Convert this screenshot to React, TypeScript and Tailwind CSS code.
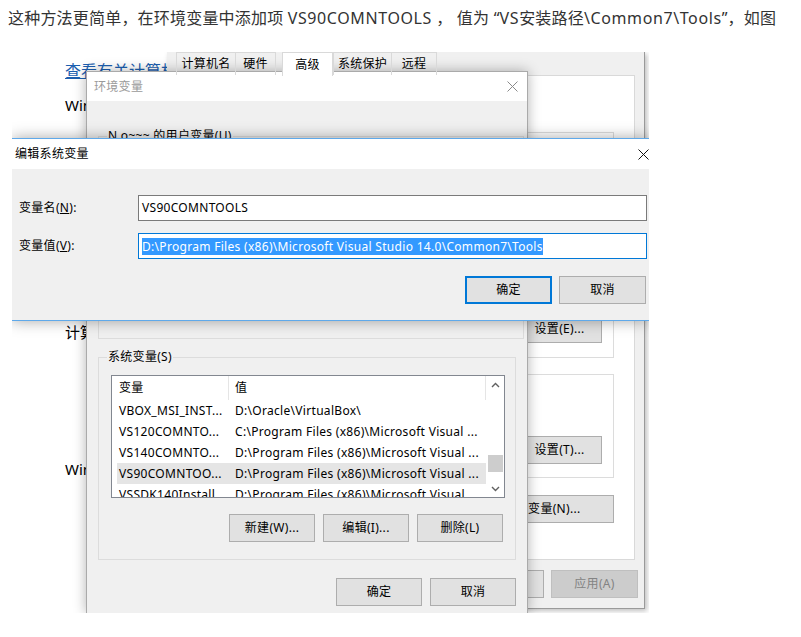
import React from "react";

const ui = "font-['Noto_Sans','Noto_Sans_CJK_SC',sans-serif]";

type BtnProps = {
  children: React.ReactNode;
  className?: string;
  primary?: boolean;
  disabled?: boolean;
};

function Btn({ children, className = "", primary = false, disabled = false }: BtnProps) {
  let look = "border border-[#adadad] bg-[#e1e1e1] text-black";
  if (primary) look = "border-2 border-[#0078d7] bg-[#e1e1e1] text-black";
  if (disabled) look = "border border-[#bfbfbf] bg-[#cccccc] text-[#838383]";
  return (
    <div className={`h-[28px] shrink-0 flex items-center justify-center text-[12px] whitespace-nowrap ${look} ${className}`}>
      {children}
    </div>
  );
}

function CloseX({ color }: { color: string }) {
  return (
    <svg width="11" height="11" viewBox="0 0 11 11">
      <path d="M0.5 0.5L10.5 10.5M10.5 0.5L0.5 10.5" stroke={color} strokeWidth="1" />
    </svg>
  );
}

function Chevron({ down = false }: { down?: boolean }) {
  return (
    <svg width="9" height="6" viewBox="0 0 9 6">
      <path
        d={down ? "M1 1L4.5 4.5L8 1" : "M1 5L4.5 1.5L8 5"}
        stroke="#606060"
        strokeWidth="1.4"
        fill="none"
      />
    </svg>
  );
}

const rows = [
  ["VBOX_MSI_INST...", "D:\\Oracle\\VirtualBox\\"],
  ["VS120COMNTO...", "C:\\Program Files (x86)\\Microsoft Visual ..."],
  ["VS140COMNTO...", "D:\\Program Files (x86)\\Microsoft Visual ..."],
  ["VS90COMNTOO...", "D:\\Program Files (x86)\\Microsoft Visual ..."],
  ["VSSDK140Install", "D:\\Program Files (x86)\\Microsoft Visual ..."],
];

const userRows = [
  ["OneDrive", "C:\\Users\\N o~~~\\OneDrive"],
  ["Path", "C:\\Users\\N o~~~\\AppData\\Local\\Microsoft..."],
  ["TEMP", "%USERPROFILE%\\AppData\\Local\\Temp"],
  ["TMP", "%USERPROFILE%\\AppData\\Local\\Temp"],
];

function ListView({ data, selected }: { data: string[][]; selected: number }) {
  return (
    <div className="mt-[10px] ml-[12px] mr-[10px] h-[123px] border border-[#828790] bg-white flex overflow-hidden text-[12px] text-black">
      <div className="flex-1 flex flex-col overflow-hidden">
        <div className="h-[24px] shrink-0 flex items-center border-r border-[#e5e5e5]">
          <div className="w-[117px] h-full pl-[7px] flex items-center border-r border-[#e5e5e5]">变量</div>
          <div className="pl-[6px]">值</div>
        </div>
        {data.map((r, i) => (
          <div
            key={i}
            className={`ml-[5px] h-[21px] shrink-0 flex items-center whitespace-nowrap ${i === selected ? "bg-[#e5e5e5]" : ""}`}
          >
            <div className="w-[111px] shrink-0 pl-[2px] overflow-hidden">{r[0]}</div>
            <div className="pl-[7px] overflow-hidden">{r[1]}</div>
          </div>
        ))}
      </div>
      <div className="w-[18px] flex flex-col items-center bg-white">
        <div className="h-[17px] flex items-center justify-center">
          <Chevron />
        </div>
        <div className="flex-1 w-full flex flex-col items-center">
          <div className="mt-[62px] w-[15px] h-[17px] bg-[#cdcdcd]" />
        </div>
        <div className="h-[17px] flex items-center justify-center">
          <Chevron down />
        </div>
      </div>
    </div>
  );
}

function GroupBox({ title, data, selected }: { title: string; data: string[][]; selected: number }) {
  return (
    <fieldset className="h-[211px] border border-[#dcdcdc]">
      <legend className="ml-[8px] px-[1px] text-[12px] leading-[16px] text-black">{title}</legend>
      <div className="flex flex-col">
        <ListView data={data} selected={selected} />
        <div className="mt-[16px] mr-[12px] flex justify-end gap-[8px]">
          <Btn className="w-[86px]">新建(W)...</Btn>
          <Btn className="w-[86px]">编辑(I)...</Btn>
          <Btn className="w-[86px]">删除(L)</Btn>
        </div>
      </div>
    </fieldset>
  );
}

function ControlPanel() {
  return (
    <div className="absolute inset-0 flex flex-col pl-[53px] text-[15px] leading-[20px] text-black whitespace-nowrap tracking-normal">
      <p className="mt-[9px] h-[20px] text-[16px] text-[#1c5fb0] underline">查看有关计算机的基本信息</p>
      <p className="mt-[14px] h-[20px]">Windows 版本</p>
      <p className="mt-[207px] h-[20px]">计算机名、域和工作组设置</p>
      <p className="mt-[117px] h-[20px]">Windows 激活</p>
    </div>
  );
}

function SysProps() {
  return (
    <div className="absolute left-[155px] top-0 w-[478px] h-[557px] bg-[#f0f0f0] border-r border-b border-[#9a9a9a] shadow-[2px_2px_5px_rgba(0,0,0,0.25)] flex flex-col text-[12px] text-black">
      <div className="relative z-10 flex pl-[9px] h-[23px] shrink-0">
        <div className="w-[60px] h-full flex items-center justify-center border border-b-0 border-[#d9d9d9]">计算机名</div>
        <div className="w-[41px] -ml-px h-full flex items-center justify-center border border-b-0 border-[#d9d9d9]">硬件</div>
        <div className="w-[51px] ml-[6px] h-[24px] flex items-center justify-center bg-white border border-b-0 border-[#d9d9d9]">高级</div>
        <div className="w-[59px] h-full flex items-center justify-center border border-b-0 border-[#d9d9d9]">系统保护</div>
        <div className="w-[46px] -ml-px h-full flex items-center justify-center border border-b-0 border-[#d9d9d9]">远程</div>
      </div>
      <div className="ml-[9px] mr-[9px] h-[485px] shrink-0 bg-white border border-[#d9d9d9] flex flex-col pl-[9px] pr-[20px] pt-[12px]">
        <p className="h-[16px] leading-[16px]">要进行大多数更改，你必须作为管理员登录。</p>
        <div className="mt-[28px] h-[110px] border border-[#dcdcdc] flex flex-col justify-end items-end pb-[14px] pr-[11px]">
          <Btn className="w-[85px]">设置(S)...</Btn>
        </div>
        <div className="mt-[15px] h-[101px] border border-[#dcdcdc] flex flex-col justify-end items-end pb-[14px] pr-[11px]">
          <Btn className="w-[85px]">设置(E)...</Btn>
        </div>
        <div className="mt-[16px] h-[104px] border border-[#dcdcdc] flex flex-col justify-end items-end pb-[13px] pr-[11px]">
          <Btn className="w-[85px]">设置(T)...</Btn>
        </div>
        <div className="mt-[17px] flex justify-end">
          <Btn className="w-[144px]">环境变量(N)...</Btn>
        </div>
      </div>
      <div className="mt-[10px] mr-[6px] flex justify-end gap-[7px]">
        <Btn className="w-[87px]">确定</Btn>
        <Btn className="w-[87px]">取消</Btn>
        <Btn className="w-[87px]" disabled>
          应用(A)
        </Btn>
      </div>
    </div>
  );
}

function EnvDialog() {
  return (
    <div className="absolute left-[74px] top-[19px] w-[442px] h-[542px] bg-[#f0f0f0] border-l border-t border-r border-[#aaaaaa] shadow-[0_0_12px_rgba(0,0,0,0.3)] flex flex-col text-[12px] text-black">
      <div className="h-[29px] shrink-0 bg-white flex items-center justify-between pl-[7px] pr-[9px]">
        <span className="text-[#9a9a9a]">环境变量</span>
        <CloseX color="#8a8a8a" />
      </div>
      <div className="flex flex-col pl-[11px] pr-[11px]">
        <div className="mt-[27px]">
          <GroupBox title="N o~~~ 的用户变量(U)" data={userRows} selected={-1} />
        </div>
        <div className="mt-[10px]">
          <GroupBox title="系统变量(S)" data={rows} selected={3} />
        </div>
        <div className="mt-[18px] flex justify-end gap-[8px]">
          <Btn className="w-[86px]">确定</Btn>
          <Btn className="w-[86px]">取消</Btn>
        </div>
      </div>
    </div>
  );
}

function EditDialog() {
  return (
    <div className="absolute left-0 top-[86px] w-[637px] h-[183px] bg-[#f0f0f0] border-t border-b border-[#5fa9ea] shadow-[0_0_14px_rgba(0,0,0,0.35)] flex flex-col text-[12px] text-black">
      <div className="h-[30px] shrink-0 bg-white flex items-center justify-between pl-[3px] pr-0">
        <span>编辑系统变量</span>
        <CloseX color="#111111" />
      </div>
      <div className="flex flex-col pl-[7px] pr-[2px] pt-[26px]">
        <div className="flex items-center h-[26px]">
          <div className="w-[119px]">
            变量名(<span className="underline">N</span>):
          </div>
          <div className="flex-1 h-[26px] border border-[#7a7a7a] bg-white pl-[3px] flex items-center whitespace-nowrap">
            VS90COMNTOOLS
          </div>
        </div>
        <div className="mt-[12px] flex items-center h-[26px]">
          <div className="w-[119px]">
            变量值(<span className="underline">V</span>):
          </div>
          <div className="flex-1 h-[26px] border border-[#0078d7] bg-white pl-[3px] flex items-center whitespace-nowrap">
            <span className="bg-[#3399ff] text-white leading-[17px]">
              D:\Program Files (x86)\Microsoft Visual Studio 14.0\Common7\Tools
            </span>
          </div>
        </div>
        <div className="mt-[17px] mr-[1px] flex justify-end gap-[7px]">
          <Btn className="w-[87px]" primary>
            确定
          </Btn>
          <Btn className="w-[87px]">取消</Btn>
        </div>
      </div>
    </div>
  );
}

export default function App() {
  return (
    <div className={`w-[801px] h-[637px] bg-white overflow-hidden flex flex-col ${ui}`}>
      <p className="pl-[8px] pt-[8px] h-[28px] text-[16px] leading-[20px] text-[#333333] whitespace-nowrap tracking-[0.2px]">
        这种方法更简单，在环境变量中添加项 <span className="tracking-[0.6px]">VS90COMNTOOLS</span> ， 值为 “
        <span className="tracking-[0.6px]">VS</span>安装路径
        <span className="tracking-[0.6px]">\Common7\Tools</span>”，如图
      </p>
      <div className="relative ml-[12px] mt-[24px] w-[637px] h-[561px] shrink-0 overflow-hidden bg-white tracking-[0.3px]">
        <ControlPanel />
        <SysProps />
        <EnvDialog />
        <EditDialog />
      </div>
    </div>
  );
}
